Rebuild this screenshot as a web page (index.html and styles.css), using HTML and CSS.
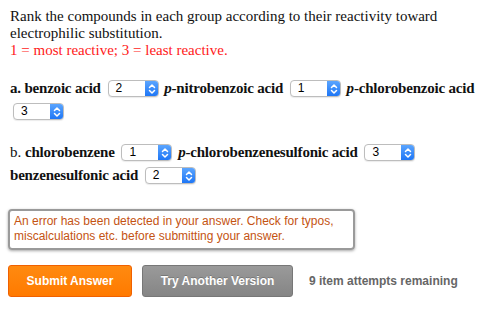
FILE: index.html
```html
<!DOCTYPE html>
<html>
<head>
<meta charset="utf-8">
<link rel="stylesheet" href="styles.css">
</head>
<body>
<div class="page">
  <p class="intro">Rank the compounds in each group according to their reactivity toward electrophilic substitution.<br><span class="note">1 = most reactive; 3 = least reactive.</span></p>

  <p class="group"><b>a. benzoic acid</b> <span class="sel"><span class="val">2</span><span class="arr"><svg viewBox="0 0 8 12" width="8" height="12"><path d="M1.5 4.5 L4 2 L6.5 4.5 M1.5 7.5 L4 10 L6.5 7.5" fill="none" stroke="#fff" stroke-width="1.5" stroke-linecap="round" stroke-linejoin="round"/></svg></span></span> <b><i>p</i>-nitrobenzoic acid</b> <span class="sel"><span class="val">1</span><span class="arr"><svg viewBox="0 0 8 12" width="8" height="12"><path d="M1.5 4.5 L4 2 L6.5 4.5 M1.5 7.5 L4 10 L6.5 7.5" fill="none" stroke="#fff" stroke-width="1.5" stroke-linecap="round" stroke-linejoin="round"/></svg></span></span> <b><i>p</i>-chlorobenzoic acid</b> <span class="sel"><span class="val">3</span><span class="arr"><svg viewBox="0 0 8 12" width="8" height="12"><path d="M1.5 4.5 L4 2 L6.5 4.5 M1.5 7.5 L4 10 L6.5 7.5" fill="none" stroke="#fff" stroke-width="1.5" stroke-linecap="round" stroke-linejoin="round"/></svg></span></span></p>

  <p class="group">b. <b>chlorobenzene</b> <span class="sel"><span class="val">1</span><span class="arr"><svg viewBox="0 0 8 12" width="8" height="12"><path d="M1.5 4.5 L4 2 L6.5 4.5 M1.5 7.5 L4 10 L6.5 7.5" fill="none" stroke="#fff" stroke-width="1.5" stroke-linecap="round" stroke-linejoin="round"/></svg></span></span> <b><i>p</i>-chlorobenzenesulfonic acid</b> <span class="sel"><span class="val">3</span><span class="arr"><svg viewBox="0 0 8 12" width="8" height="12"><path d="M1.5 4.5 L4 2 L6.5 4.5 M1.5 7.5 L4 10 L6.5 7.5" fill="none" stroke="#fff" stroke-width="1.5" stroke-linecap="round" stroke-linejoin="round"/></svg></span></span> <b>benzenesulfonic acid</b> <span class="sel"><span class="val">2</span><span class="arr"><svg viewBox="0 0 8 12" width="8" height="12"><path d="M1.5 4.5 L4 2 L6.5 4.5 M1.5 7.5 L4 10 L6.5 7.5" fill="none" stroke="#fff" stroke-width="1.5" stroke-linecap="round" stroke-linejoin="round"/></svg></span></span></p>

  <div class="error">An error has been detected in your answer. Check for typos, miscalculations etc. before submitting your answer.</div>

  <div class="actions">
    <span class="btn submit">Submit Answer</span>
    <span class="btn another">Try Another Version</span>
    <span class="remaining">9 item attempts remaining</span>
  </div>
</div>
</body>
</html>
```

FILE: styles.css
```css
html, body {
  margin: 0;
  padding: 0;
  background: #fff;
}
.page {
  padding: 8px 8px 0 10px;
  font-family: "Liberation Serif", "Times New Roman", serif;
  font-size: 15px;
  color: #111;
}
.intro {
  margin: 0;
  line-height: 17px;
}
.note {
  color: #ff1a1a;
}
.group {
  margin: 18px 0 0 0;
  line-height: 23px;
}
.group b {
  letter-spacing: -0.2px;
}
.sel {
  display: inline-flex;
  vertical-align: middle;
  position: relative;
  top: -1px;
  width: 49px;
  height: 15px;
  margin: 0 2px 0 3px;
  border: 1px solid #bdbdbd;
  border-radius: 4px;
  background: #fff;
  overflow: hidden;
  font-family: "Liberation Sans", Arial, sans-serif;
  font-size: 12px;
  line-height: 15px;
  color: #000;
  box-shadow: 0 1px 1px rgba(0,0,0,0.08);
}
.sel .val {
  flex: 1;
  padding-left: 7px;
}
.sel .arr {
  width: 14px;
  background: linear-gradient(#5fa8ff, #1a73f5);
  display: flex;
  align-items: center;
  justify-content: center;
  margin: -1px -1px -1px 0;
  border-radius: 0 4px 4px 0;
}
.error {
  margin: 22px 0 0 -2px;
  width: 333px;
  padding: 3px 6px 4px 4px;
  border: 2px solid #9a9a9a;
  border-radius: 4px;
  box-shadow: 0 1px 3px rgba(0,0,0,0.35);
  font-family: "Liberation Sans", Arial, sans-serif;
  font-size: 12px;
  line-height: 15px;
  color: #c45312;
}
.actions {
  margin: 15px 0 0 -2px;
  display: flex;
  align-items: center;
}
.btn {
  display: flex;
  align-items: center;
  justify-content: center;
  height: 32px;
  border-radius: 3px;
  font-family: "Liberation Sans", Arial, sans-serif;
  font-weight: bold;
  font-size: 12px;
  color: #fff;
  box-sizing: border-box;
}
.submit {
  width: 124px;
  background: linear-gradient(#ff8a10, #ff7a00);
  border: 1px solid #f06000;
}
.another {
  width: 151px;
  margin-left: 10px;
  background: linear-gradient(#9a9a9a, #858585);
  border: 1px solid #777;
  text-shadow: 0 -1px 0 rgba(0,0,0,0.2);
}
.remaining {
  margin-left: 16px;
  font-family: "Liberation Sans", Arial, sans-serif;
  font-weight: bold;
  font-size: 12px;
  color: #666;
}
```
